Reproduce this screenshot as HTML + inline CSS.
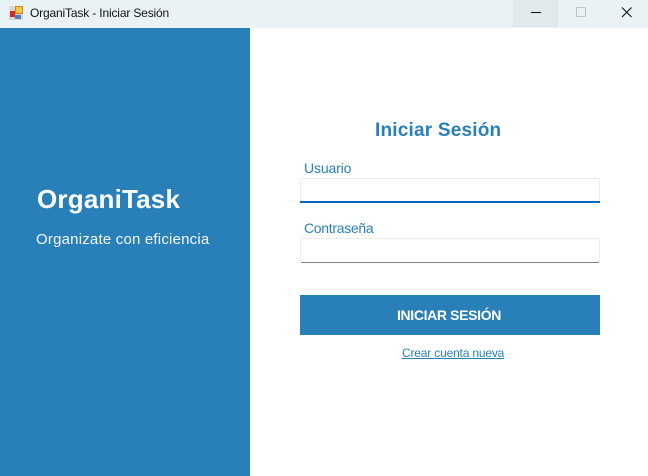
<!DOCTYPE html>
<html><head><meta charset="utf-8"><style>
html,body{margin:0;padding:0;background:#fff}
#r{position:relative;width:648px;height:476px;overflow:hidden;background:#fff;font-family:"Liberation Sans",sans-serif}
#r div,#r a{position:absolute;white-space:nowrap}
.t{line-height:20px;height:20px}
</style></head><body><div id="r">
<div style="left:0;top:0;width:648px;height:28px;background:#e9f3f6"></div>
<div style="left:513px;top:0;width:45px;height:27px;background:#e0e9ec"></div>
<svg style="position:absolute;left:0;top:0" width="648" height="28">
<rect x="9" y="6" width="14" height="14" fill="#d8d8d8"/>
<rect x="15.500" y="6.500" width="7" height="7" fill="#f5c84a" stroke="#c58a1c"/>
<rect x="10" y="11" width="5" height="6" fill="#d22a20"/>
<rect x="15" y="15" width="6" height="4" fill="#4a7fc4"/>
<rect x="531" y="12" width="10" height="1" fill="#111"/>
<rect x="576.500" y="7.500" width="9" height="9" rx="1" fill="none" stroke="#b9c1c4"/>
<path d="M622 7.500L631.500 17M631.500 7.500L622 17" stroke="#111" stroke-width="1.100" fill="none"/>
</svg>
<div class="t" style="left:30px;top:3px;font-size:12px;letter-spacing:-.16px;color:#111">OrganiTask - Iniciar Sesión</div>
<div style="left:0;top:28px;width:250px;height:448px;background:#2980b9"></div>
<div class="t" style="left:37px;top:189px;font-size:26px;font-weight:bold;letter-spacing:.2px;color:#fff">OrganiTask</div>
<div class="t" style="left:36px;top:230px;font-size:15px;letter-spacing:.2px;color:#f2f8fb">Organizate con eficiencia</div>
<div class="t" style="left:375px;top:121px;font-size:19px;font-weight:bold;letter-spacing:.2px;color:#2980b9">Iniciar Sesión</div>
<div class="t" style="left:304px;top:158px;font-size:14px;letter-spacing:-.14px;color:#2980b9">Usuario</div>
<div style="left:300px;top:178px;width:298px;height:22px;border:1px solid #ececec;border-bottom:0;background:#fff"></div>
<div style="left:300px;top:201px;width:300px;height:2px;background:#0067c0"></div>
<div class="t" style="left:304px;top:218px;font-size:14px;letter-spacing:-.3px;color:#2980b9">Contraseña</div>
<div style="left:300px;top:238px;width:298px;height:23px;border:1px solid #ececec;border-bottom:0;background:#fff"></div>
<div style="left:301px;top:262px;width:298px;height:1px;background:#858585"></div>
<div style="left:300px;top:295px;width:298px;height:40px;padding-right:2px;background:#2980b9;color:#fff;font-size:14px;font-weight:bold;letter-spacing:-.35px;line-height:40px;text-align:center">INICIAR SESIÓN</div>
<a style="left:402px;top:345px;font-size:12px;letter-spacing:-.18px;line-height:16px;color:#2980b9;text-decoration:underline">Crear cuenta nueva</a>
</div></body></html>
